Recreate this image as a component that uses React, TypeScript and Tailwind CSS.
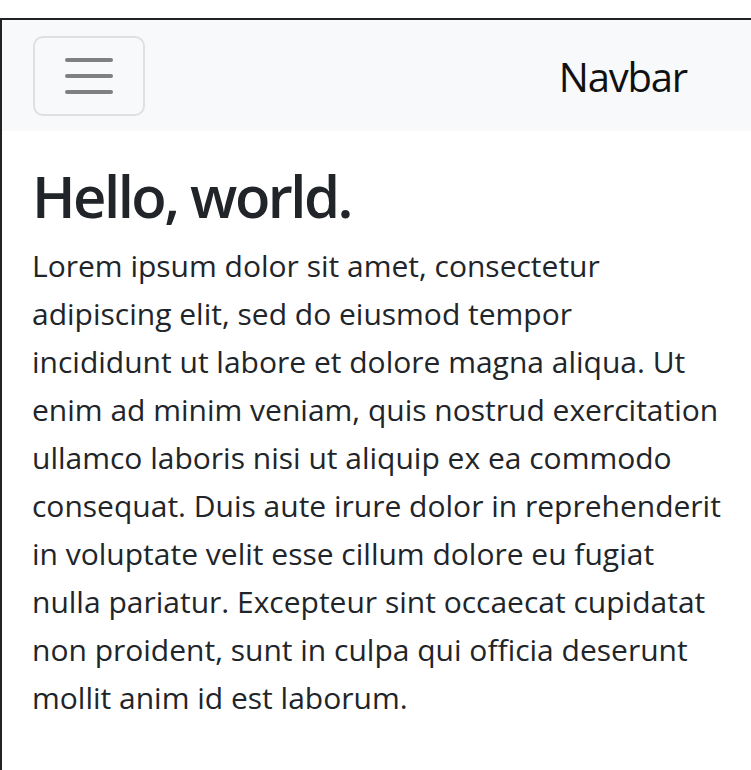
import React from "react";

const lines = [
  "Lorem ipsum dolor sit amet, consectetur",
  "adipiscing elit, sed do eiusmod tempor",
  "incididunt ut labore et dolore magna aliqua. Ut",
  "enim ad minim veniam, quis nostrud exercitation",
  "ullamco laboris nisi ut aliquip ex ea commodo",
  "consequat. Duis aute irure dolor in reprehenderit",
  "in voluptate velit esse cillum dolore eu fugiat",
  "nulla pariatur. Excepteur sint occaecat cupidatat",
  "non proident, sunt in culpa qui officia deserunt",
  "mollit anim id est laborum.",
];

export default function App() {
  return (
    <div className="min-h-[770px] bg-white pt-[18px] overflow-hidden" style={{ fontFamily: '"Open Sans", "Noto Sans", sans-serif' }}>
      <div className="border-t-2 border-l-2 border-[#222222] min-h-[752px]">
        <nav className="h-[111px] bg-[#f8f9fa] flex items-center justify-between pl-[31px] pr-[64px]">
          <button className="w-[112px] h-[80px] border-2 border-[#dfe0e1] rounded-[10px] flex flex-col items-center justify-center gap-[12px]">
            <span className="block w-[48px] h-[4px] rounded-full bg-[#808080]" />
            <span className="block w-[48px] h-[4px] rounded-full bg-[#808080]" />
            <span className="block w-[48px] h-[4px] rounded-full bg-[#808080]" />
          </button>
          <span className="text-[40px] leading-[40px] text-[#111111] tracking-[-1.2px] mt-[2px]">Navbar</span>
        </nav>
        <main className="pl-[30px] text-[#212529]">
          <h1 className="mt-[30px] text-[58px] leading-[1.2] font-semibold tracking-[-2.5px]">Hello, world.</h1>
          <p className="mt-[11px] text-[30px] leading-[48px] tracking-[0px] whitespace-nowrap">
            {lines.map((l, i) => (
              <React.Fragment key={i}>
                {l}
                {i < lines.length - 1 && <br />}
              </React.Fragment>
            ))}
          </p>
        </main>
      </div>
    </div>
  );
}
